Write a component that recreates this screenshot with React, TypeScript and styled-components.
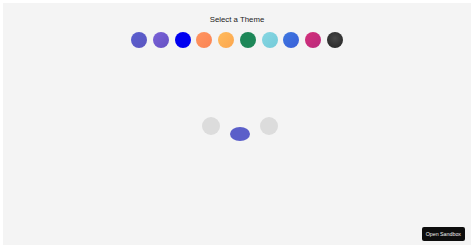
import React from "react";
import styled, {createGlobalStyle} from "styled-components";

const GlobalStyle = createGlobalStyle`
  html, body {
    margin: 0;
    padding: 0;
    background: #ffffff;
  }
  body {
    font-family: "Liberation Sans", Arial, sans-serif;
  }
`;

const themes = [
    "linear-gradient(135deg, #5a5fcf, #5b55c0)",
    "linear-gradient(135deg, #7a62d8, #6450c2)",
    "#0000f0",
    "linear-gradient(135deg, #ff9560, #fb8454)",
    "linear-gradient(135deg, #ffbb5c, #fca64e)",
    "#1d8758",
    "linear-gradient(135deg, #86d6e2, #74cbd9)",
    "linear-gradient(135deg, #3d78e0, #3a5fd8)",
    "linear-gradient(135deg, #d4307a, #b92a7d)",
    "radial-gradient(circle at 50% 40%, #474747, #222222)",
];

const Page = styled.div`
  box-sizing: border-box;
  width: 474px;
  height: 248px;
  padding: 3px;
`;

const Panel = styled.div`
  position: relative;
  height: 100%;
  background: #f4f4f4;
  display: flex;
  flex-direction: column;
  align-items: center;
`;

const Title = styled.div`
  margin-top: 12px;
  font-size: 7.8px;
  color: #222;
  line-height: 10px;
`;

const Swatches = styled.div`
  display: flex;
  gap: 5.8px;
  margin-top: 7px;
`;

const Swatch = styled.div<{ $bg: string }>`
  width: 16px;
  height: 16px;
  border-radius: 50%;
  background: ${p => p.$bg};
`;

const Loader = styled.div`
  display: flex;
  align-items: flex-start;
  gap: 10px;
  margin-top: 69px;
  margin-left: 6px;
`;

const Dot = styled.div<{ $active?: boolean }>`
  width: ${p => (p.$active ? 20 : 18)}px;
  height: ${p => (p.$active ? 14 : 18)}px;
  margin-top: ${p => (p.$active ? 10 : 0)}px;
  border-radius: 50%;
  background: ${p => (p.$active ? "#5b5fc9" : "#dcdcdc")};
`;

const SandboxButton = styled.button`
  position: absolute;
  right: 6px;
  bottom: 4px;
  background: #0d0d0d;
  color: #f2f2f2;
  border: none;
  border-radius: 2px;
  font-family: "Liberation Sans", Arial, sans-serif;
  font-size: 5.3px;
  padding: 0 4px;
  height: 14px;
  line-height: 14px;
`;

const App: React.FC = () => {
    return (
        <Page>
            <GlobalStyle/>
            <Panel>
                <Title>Select a Theme</Title>
                <Swatches>
                    {themes.map((bg, i) => <Swatch key={`theme-${i}`} $bg={bg}/>)}
                </Swatches>
                <Loader>
                    <Dot/>
                    <Dot $active/>
                    <Dot/>
                </Loader>
                <SandboxButton>Open Sandbox</SandboxButton>
            </Panel>
        </Page>
    );
};

export default App;
